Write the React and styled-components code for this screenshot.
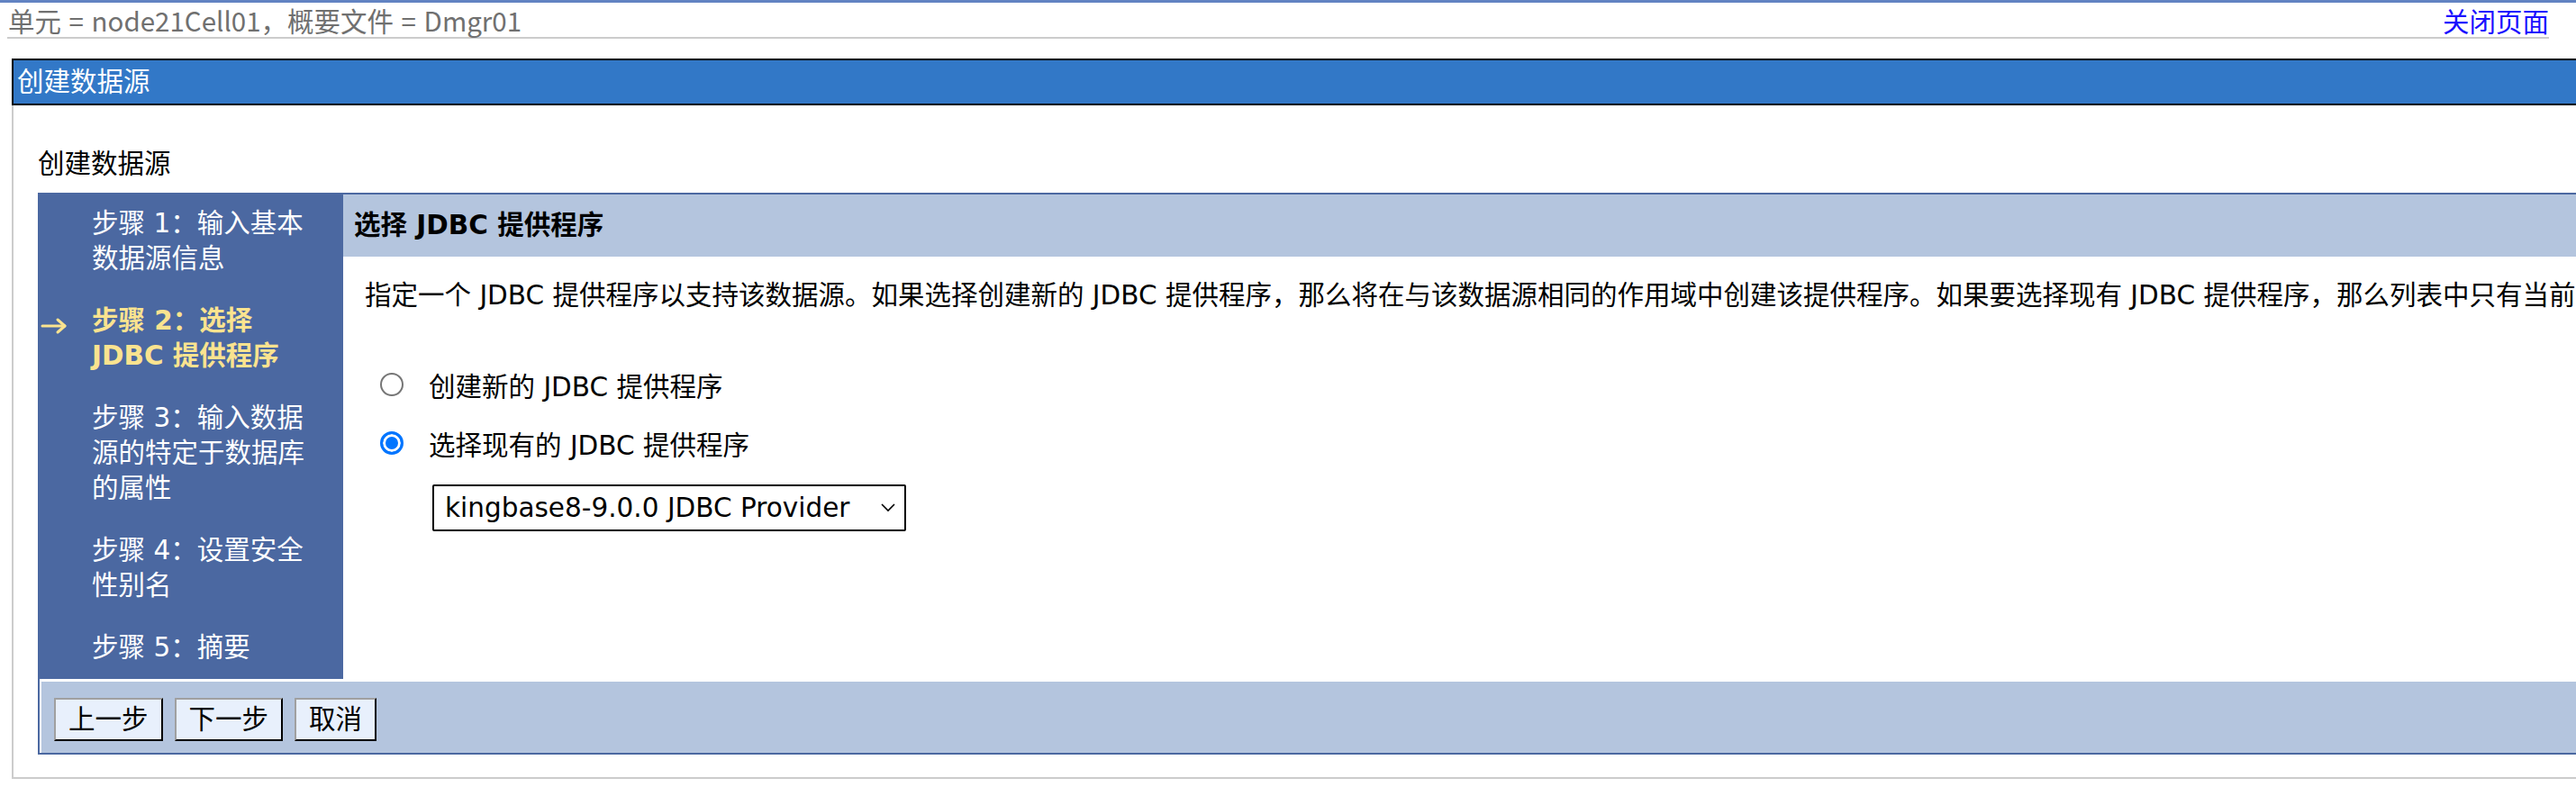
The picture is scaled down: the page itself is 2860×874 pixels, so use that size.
import React from 'react'
import styled, { createGlobalStyle } from 'styled-components'

const GlobalStyle = createGlobalStyle`
    html, body {
        margin: 0;
        overflow: hidden;
        background: #ffffff;
    }
    body {
        font-family: "DejaVu Sans", "Noto Sans CJK SC", "Microsoft YaHei", sans-serif;
        font-size: 29.5px;
        color: #000;
    }
`

const TopRule = styled.div`
    height: 3px;
    background: #6283c2;
`

const Header = styled.div`
    display: flex;
    justify-content: space-between;
    align-items: center;
    width: calc(100vw - 38px);
    margin-left: 8px;
    height: 38px;
    line-height: 38px;
    border-bottom: 2px solid #cccccc;
    font-family: "Noto Sans CJK SC", sans-serif;
`

const Context = styled.span`
    color: #707070;
    padding-left: 1px;
    word-spacing: 2px;
`

const CloseLink = styled.a`
    color: #1a10ff;
    text-decoration: none;
    cursor: pointer;
`

const Panel = styled.section`
    width: 3400px;
    margin: 22px 0 0 13px;
    border-left: 2px solid #cccccc;
    border-bottom: 2px solid #cccccc;
`

const PanelTitle = styled.h1`
    margin: 0 0 0 -2px;
    height: 48px;
    line-height: 48px;
    padding-left: 4px;
    border: 2px solid #000;
    background: #3278c7;
    color: #ffffff;
    font-size: inherit;
    font-weight: normal;
`

const PanelBody = styled.div`
    padding: 0 0 25px 27px;
`

const SectionLabel = styled.div`
    margin-top: 46px;
    line-height: 39px;
`

const Wizard = styled.div`
    margin-top: 12px;
`

const WizardMain = styled.div`
    display: flex;
`

const Sidebar = styled.nav`
    flex: none;
    width: 339px;
    box-sizing: border-box;
    padding: 15px 0;
    background: #4b68a1;
`

const Step = styled.div`
    display: flex;
    line-height: 39px;
    margin-bottom: 30px;
    color: ${p => (p.$current ? '#fae38f' : '#ffffff')};
    font-weight: ${p => (p.$current ? 'bold' : 'normal')};
    &:last-child {
        margin-bottom: 0;
    }
`

const Marker = styled.div`
    flex: none;
    width: 60px;
    padding: 6px 0 0 3px;
    box-sizing: border-box;
`

const StepText = styled.div`
    width: 245px;
`

const Content = styled.div`
    flex: 1;
    border-top: 2px solid #4b68a1;
`

const ContentTitle = styled.h2`
    margin: 0;
    height: 69px;
    line-height: 69px;
    padding-left: 12px;
    background: #b4c5de;
    font-size: inherit;
    font-weight: bold;
`

const Description = styled.p`
    margin: 24px 0 0 24px;
    line-height: 39px;
    white-space: nowrap;
`

const Options = styled.div`
    margin: 59px 0 0 41px;
`

const Option = styled.label`
    display: flex;
    align-items: center;
    gap: 28px;
    height: 39px;
    margin-top: ${p => (p.$first ? '0' : '26px')};
`

const Radio = styled.input`
    appearance: none;
    margin: 0;
    width: 26px;
    height: 26px;
    box-sizing: border-box;
    border-radius: 50%;
    border: 2px solid #767676;
    background: #ffffff;
    &:checked {
        border: 3px solid #0075ff;
        background: #0075ff;
        box-shadow: inset 0 0 0 3px #ffffff;
    }
`

const SelectWrap = styled.div`
    position: relative;
    width: 526px;
    margin: 27px 0 0 58px;
`

const Select = styled.select`
    appearance: none;
    width: 100%;
    height: 52px;
    box-sizing: border-box;
    padding: 0 40px 0 12px;
    border: 2px solid #000;
    border-radius: 2px;
    background: #ffffff;
    font-family: inherit;
    font-size: inherit;
    color: #000;
`

const Chevron = styled.svg`
    position: absolute;
    right: 12px;
    top: 21px;
    pointer-events: none;
`

const ButtonWrap = styled.div`
    border-left: 2px solid #4b68a1;
    border-bottom: 2px solid #4b68a1;
    padding: 3px 0 0 2px;
`

const ButtonBar = styled.div`
    display: flex;
    gap: 13px;
    padding: 18px 0 13px 14px;
    background: #b4c5de;
`

const Button = styled.button`
    height: 48px;
    padding: 0 14px;
    border: 2px solid;
    border-color: #a0a0a0 #000 #000 #a0a0a0;
    background: #e8f0fc;
    font-family: inherit;
    font-size: inherit;
    line-height: 44px;
    color: #000;
`

const steps = [
    '步骤 1：输入基本数据源信息',
    '步骤 2：选择 JDBC 提供程序',
    '步骤 3：输入数据源的特定于数据库的属性',
    '步骤 4：设置安全性别名',
    '步骤 5：摘要',
]

const Arrow = () => (
    <svg width="30" height="20" viewBox="0 0 30 20" fill="none" stroke="#fae38f" strokeWidth="3" strokeLinecap="round" strokeLinejoin="round">
        <line x1="2" y1="10" x2="27" y2="10" />
        <polyline points="19,3 27,10 19,17" />
    </svg>
)

const App = () => {
    return (
        <>
            <GlobalStyle />
            <TopRule />
            <Header>
                <Context>单元 = node21Cell01，概要文件 = Dmgr01</Context>
                <CloseLink>关闭页面</CloseLink>
            </Header>
            <Panel>
                <PanelTitle>创建数据源</PanelTitle>
                <PanelBody>
                    <SectionLabel>创建数据源</SectionLabel>
                    <Wizard>
                        <WizardMain>
                            <Sidebar>
                                {steps.map((s, i) => (
                                    <Step key={s} $current={i === 1}>
                                        <Marker>{i === 1 && <Arrow />}</Marker>
                                        <StepText>{s}</StepText>
                                    </Step>
                                ))}
                            </Sidebar>
                            <Content>
                                <ContentTitle>选择 JDBC 提供程序</ContentTitle>
                                <Description>
                                    指定一个 JDBC 提供程序以支持该数据源。如果选择创建新的 JDBC 提供程序，那么将在与该数据源相同的作用域中创建该提供程序。如果要选择现有 JDBC 提供程序，那么列表中只有当前作用域中的提供程序可用。
                                </Description>
                                <Options>
                                    <Option $first>
                                        <Radio type="radio" name="provider" />
                                        创建新的 JDBC 提供程序
                                    </Option>
                                    <Option>
                                        <Radio type="radio" name="provider" defaultChecked />
                                        选择现有的 JDBC 提供程序
                                    </Option>
                                    <SelectWrap>
                                        <Select defaultValue="kingbase">
                                            <option value="kingbase">kingbase8-9.0.0 JDBC Provider</option>
                                        </Select>
                                        <Chevron width="16" height="10" viewBox="0 0 16 10" fill="none" stroke="#000" strokeWidth="1.6">
                                            <polyline points="1,1 8,8 15,1" />
                                        </Chevron>
                                    </SelectWrap>
                                </Options>
                            </Content>
                        </WizardMain>
                        <ButtonWrap>
                            <ButtonBar>
                                <Button>上一步</Button>
                                <Button>下一步</Button>
                                <Button>取消</Button>
                            </ButtonBar>
                        </ButtonWrap>
                    </Wizard>
                </PanelBody>
            </Panel>
        </>
    )
}

export default App
